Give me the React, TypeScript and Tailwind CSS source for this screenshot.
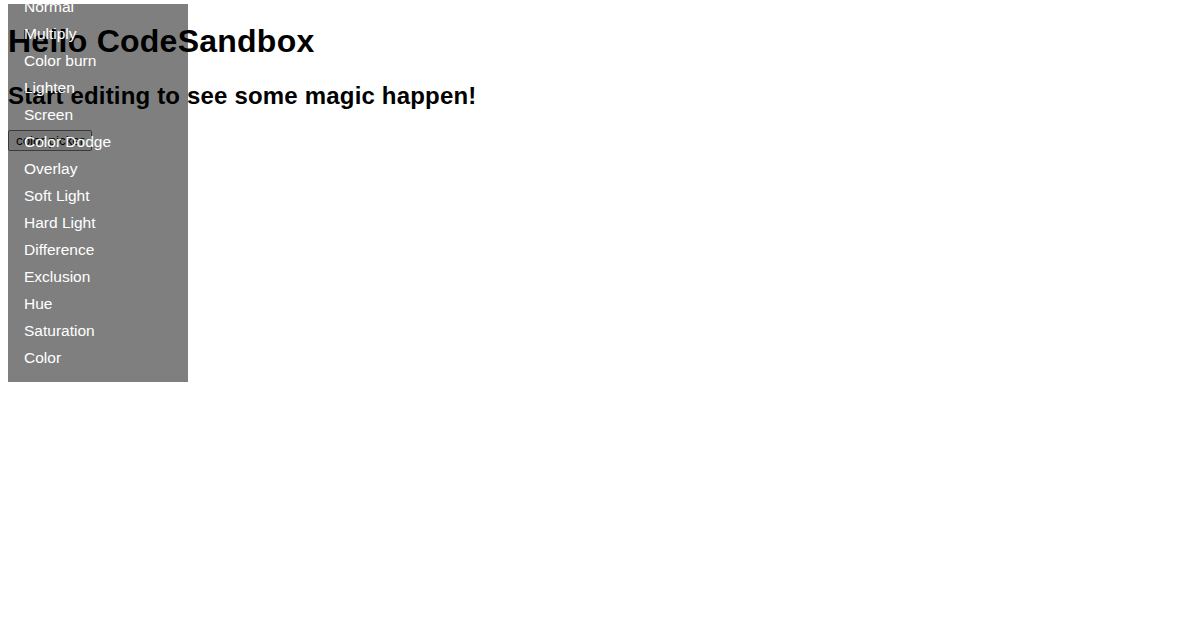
import React from "react";

const modes = [
  "Normal",
  "Multiply",
  "Color burn",
  "Lighten",
  "Screen",
  "Color Dodge",
  "Overlay",
  "Soft Light",
  "Hard Light",
  "Difference",
  "Exclusion",
  "Hue",
  "Saturation",
  "Color",
];

export default function App() {
  return (
    <div className="relative min-h-[630px] bg-white pl-2 pt-[23px] font-['Liberation_Sans',Arial,sans-serif] text-black">
      <h1 className="m-0 text-[32px] font-bold leading-[36.8px] tracking-[0.25px]">Hello CodeSandbox</h1>
      <h2 className="mt-[21.9px] text-[24px] font-bold leading-[27.6px] tracking-[0.18px]">
        Start editing to see some magic happen!
      </h2>
      <button className="mt-[20.7px] rounded-[2px] border border-[#767676] bg-[#efefef] px-[7px] py-[2px] text-[13.33px] leading-[15.33px] text-black">
        color picker
      </button>
      <div className="absolute left-[8px] top-[4px] h-[378px] w-[180px] bg-black/50">
        <ul className="-mt-[11px]">
          {modes.map((m) => (
            <li key={m} className="h-[27px] pl-4 text-[15.5px] leading-[27px] text-white">
              {m}
            </li>
          ))}
        </ul>
      </div>
    </div>
  );
}
